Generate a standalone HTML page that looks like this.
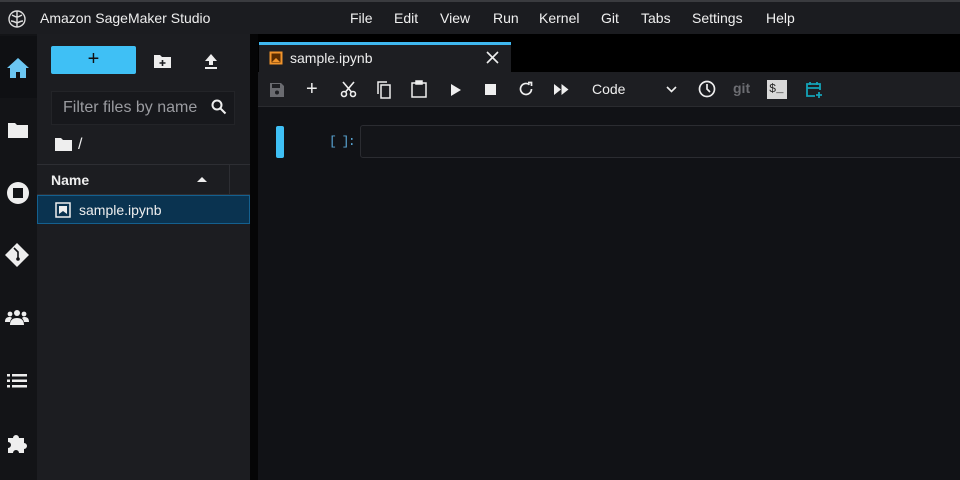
<!DOCTYPE html>
<html><head><style>
*{margin:0;padding:0;box-sizing:border-box}
body{width:960px;height:480px;overflow:hidden;background:#111216;font-family:"Liberation Sans",sans-serif;color:#e8e8e8;position:relative}
.a{position:absolute}
.top{left:0;top:0;width:960px;height:34px;background:#1b1c20;border-top:2px solid #3a3b3f}
.menu span{position:absolute;top:10px;font-size:14px;color:#f0f0f0}
</style></head><body>
<div class="a top"></div>
<svg class="a" style="left:7px;top:9px" width="20" height="20" viewBox="0 0 20 20" fill="none" stroke="#ddd" stroke-width="1.4"><circle cx="10" cy="10" r="8"/><path d="M10 2v16M5 6c2 1 3 2 5 2M15 6c-2 1-3 2-5 2M4 12c2 0 4 1 6 2M16 12c-2 0-4 1-6 2"/></svg>
<div class="a" style="left:40px;top:10px;font-size:14px;color:#eee">Amazon SageMaker Studio</div>
<div class="menu">
<span style="left:350px">File</span><span style="left:394px">Edit</span><span style="left:440px">View</span><span style="left:493px">Run</span><span style="left:539px">Kernel</span><span style="left:601px">Git</span><span style="left:641px">Tabs</span><span style="left:692px">Settings</span><span style="left:766px">Help</span>
</div>
<div class="a" style="left:0;top:34px;width:37px;height:446px;background:#131417"></div>
<div class="a" style="left:0;top:36px;width:37px;height:62px;background:#0f1013"></div>
<svg class="a" style="left:6px;top:57px" width="24" height="22" viewBox="0 0 24 22"><path d="M12 1L1 11h3v10h6v-6h4v6h6V11h3z" fill="#6bc6f2"/></svg>
<svg class="a" style="left:7px;top:121px" width="22" height="18" viewBox="0 0 22 18"><path d="M1 2h7l2 2h11v13H1z" fill="#eee"/></svg>
<svg class="a" style="left:6px;top:181px" width="24" height="24" viewBox="0 0 24 24"><circle cx="12" cy="12" r="11" fill="#eee"/><rect x="7" y="7" width="10" height="10" fill="#131417"/></svg>
<svg class="a" style="left:5px;top:243px" width="24" height="24" viewBox="0 0 24 24"><path d="M12 0L24 12 12 24 0 12z" fill="#eee"/><path d="M9 5l4 4v7" stroke="#131417" stroke-width="1.6" fill="none"/><circle cx="13" cy="16" r="1.8" fill="#131417"/></svg>
<svg class="a" style="left:5px;top:309px" width="24" height="18" viewBox="0 0 24 18"><circle cx="12" cy="4" r="3" fill="#eee"/><circle cx="5" cy="5" r="2.4" fill="#eee"/><circle cx="19" cy="5" r="2.4" fill="#eee"/><path d="M5 16c0-5 3-7 7-7s7 2 7 7zM0 13c0-4 2-5 5-5 1 0 2 1 2 1-1 1-2 3-2 4zM24 13c0-4-2-5-5-5-1 0-2 1-2 1 1 1 2 3 2 4z" fill="#eee"/></svg>
<svg class="a" style="left:7px;top:373px" width="20" height="16" viewBox="0 0 20 16" fill="#eee"><rect x="0" y="1" width="3" height="2.5"/><rect x="5" y="1" width="15" height="2.5"/><rect x="0" y="6.5" width="3" height="2.5"/><rect x="5" y="6.5" width="15" height="2.5"/><rect x="0" y="12" width="3" height="2.5"/><rect x="5" y="12" width="15" height="2.5"/></svg>
<svg class="a" style="left:6px;top:432px" width="22" height="22" viewBox="0 0 22 22"><path d="M2 6h5a3 3 0 1 1 6 0h5v5a3 3 0 1 1 0 6v4H13a3 3 0 1 0-6 0H2v-5a3 3 0 1 0 0-6z" fill="#eee"/></svg>
<div class="a" style="left:37px;top:34px;width:213px;height:446px;background:#1c1d21"></div>
<div class="a" style="left:250px;top:34px;width:8px;height:446px;background:#050506"></div>
<div class="a" style="left:51px;top:46px;width:85px;height:28px;background:#3fc0f5;border-radius:2px;color:#111;font-size:20px;text-align:center;line-height:27px">+</div>
<svg class="a" style="left:154px;top:54px" width="17" height="14" viewBox="0 0 17 14"><path d="M0 1h6l2 2h9v11H0z" fill="#eee"/><path d="M8.5 6v6M5.5 9h6" stroke="#1c1d21" stroke-width="1.6"/></svg>
<svg class="a" style="left:204px;top:53px" width="14" height="16" viewBox="0 0 14 16"><path d="M7 1L1 8h4v4h4V8h4z M1 14h12v2H1z" fill="#eee"/></svg>
<div class="a" style="left:51px;top:91px;width:184px;height:34px;background:#17181c;border:1px solid #232428"></div>
<div class="a" style="left:63px;top:99px;font-size:16px;color:#9a9ba0">Filter files by name</div>
<svg class="a" style="left:211px;top:99px" width="16" height="16" viewBox="0 0 16 16" fill="none" stroke="#eee" stroke-width="2"><circle cx="6" cy="6" r="4.5"/><path d="M9.5 9.5l5 5"/></svg>
<svg class="a" style="left:55px;top:137px" width="17" height="14" viewBox="0 0 17 14"><path d="M0 1h6l2 2h9v11H0z" fill="#eee"/></svg>
<div class="a" style="left:78px;top:136px;font-size:16px;color:#eee">/</div>
<div class="a" style="left:37px;top:164px;width:213px;height:31px;border-top:1px solid #2d2e33;border-bottom:1px solid #2d2e33"></div>
<div class="a" style="left:229px;top:165px;width:1px;height:29px;background:#2d2e33"></div>
<div class="a" style="left:51px;top:172px;font-size:14px;font-weight:bold;color:#eee">Name</div>
<div class="a" style="left:197px;top:177px;width:0;height:0;border-left:5px solid transparent;border-right:5px solid transparent;border-bottom:5px solid #eee"></div>
<div class="a" style="left:37px;top:195px;width:213px;height:29px;background:#0a3350;border:1px solid #14608f"></div>
<svg class="a" style="left:55px;top:202px" width="16" height="16" viewBox="0 0 16 16"><rect x="1" y="1" width="14" height="14" fill="none" stroke="#eee" stroke-width="1.5"/><path d="M4 4h8v8l-4-3-4 3z" fill="#eee"/></svg>
<div class="a" style="left:79px;top:202px;font-size:14px;color:#eee">sample.ipynb</div>
<div class="a" style="left:258px;top:34px;width:702px;height:38px;background:#000"></div>
<div class="a" style="left:259px;top:42px;width:252px;height:30px;background:#1d1e22;border-top:3px solid #3fb8f0"></div>
<svg class="a" style="left:269px;top:51px" width="14" height="14" viewBox="0 0 14 14"><rect x="0.5" y="0.5" width="13" height="13" fill="#f0932b"/><rect x="2.5" y="2.5" width="9" height="9" fill="#5a2c00"/><path d="M3 11l4-4 4 4z" fill="#f0932b"/></svg>
<div class="a" style="left:290px;top:50px;font-size:14px;color:#eee">sample.ipynb</div>
<svg class="a" style="left:486px;top:51px" width="13" height="13" viewBox="0 0 13 13" stroke="#eee" stroke-width="1.6"><path d="M1 1l11 11M12 1L1 12"/></svg>
<div class="a" style="left:258px;top:72px;width:702px;height:35px;background:#1d1e22;border-bottom:1px solid #2a2b2f"></div>
<svg class="a" style="left:270px;top:83px" width="14" height="14" viewBox="0 0 14 14"><path d="M0 0h11l3 3v11H0z" fill="#6a6b70"/><rect x="2" y="1" width="8" height="4" fill="#1d1e22"/><circle cx="7" cy="9.5" r="2" fill="#1d1e22"/></svg>
<div class="a" style="left:306px;top:78px;font-size:20px;color:#eee">+</div>
<svg class="a" style="left:340px;top:81px" width="17" height="17" viewBox="0 0 17 17" fill="none" stroke="#eee" stroke-width="1.6"><circle cx="4" cy="13" r="2.5"/><circle cx="13" cy="13" r="2.5"/><path d="M5.5 11L14 1M11.5 11L3 1"/></svg>
<svg class="a" style="left:376px;top:81px" width="16" height="18" viewBox="0 0 16 18" fill="none" stroke="#eee" stroke-width="1.5"><path d="M2 13V1h9"/><rect x="5" y="4" width="9" height="13"/></svg>
<svg class="a" style="left:411px;top:80px" width="16" height="18" viewBox="0 0 16 18" fill="none" stroke="#eee" stroke-width="1.5"><rect x="1" y="3" width="14" height="14"/><rect x="5" y="1" width="6" height="3" fill="#eee"/></svg>
<svg class="a" style="left:451px;top:84px" width="10" height="12" viewBox="0 0 10 12"><path d="M0 0l10 6-10 6z" fill="#eee"/></svg>
<div class="a" style="left:485px;top:84px;width:11px;height:11px;background:#eee"></div>
<svg class="a" style="left:518px;top:81px" width="16" height="16" viewBox="0 0 16 16" fill="none" stroke="#eee" stroke-width="1.7"><path d="M13.5 8a5.5 5.5 0 1 1-2-4.3"/><path d="M10 1.5h3.5V5"/></svg>
<svg class="a" style="left:554px;top:84px" width="15" height="11" viewBox="0 0 15 11" fill="#eee"><path d="M0 0l7 5.5L0 11zM7.5 0l7 5.5-7 5.5z"/></svg>
<div class="a" style="left:592px;top:81px;font-size:14px;color:#eee">Code</div>
<svg class="a" style="left:666px;top:86px" width="11" height="7" viewBox="0 0 11 7" fill="none" stroke="#eee" stroke-width="1.6"><path d="M1 1l4.5 4.5L10 1"/></svg>
<svg class="a" style="left:698px;top:80px" width="18" height="18" viewBox="0 0 18 18" fill="none" stroke="#eee" stroke-width="1.7"><circle cx="9" cy="9" r="7.5"/><path d="M9 4v5l3 3"/></svg>
<div class="a" style="left:733px;top:80px;font-size:14px;font-weight:bold;color:#6c6d72">git</div>
<div class="a" style="left:767px;top:80px;width:20px;height:19px;background:#d8d8d8;color:#222;font-size:12px;font-family:'Liberation Mono',monospace;line-height:19px;padding-left:2px">$_</div>
<svg class="a" style="left:805px;top:80px" width="18" height="19" viewBox="0 0 18 19" fill="none" stroke="#14a3b8" stroke-width="1.8"><path d="M10 16H2V4h13v6M2 8h13M5 2v3M12 2v3M14 12v6M11 15h6"/></svg>
<div class="a" style="left:276px;top:126px;width:8px;height:32px;background:#3fc0f5;border-radius:2px"></div>
<div class="a" style="left:329px;top:134px;font-size:13px;color:#5aa7d6;font-family:'Liberation Mono',monospace;letter-spacing:-1.5px">[ ]:</div>
<div class="a" style="left:360px;top:125px;width:605px;height:33px;background:#141519;border:1px solid #2b2c31;border-radius:3px"></div>
</body></html>
